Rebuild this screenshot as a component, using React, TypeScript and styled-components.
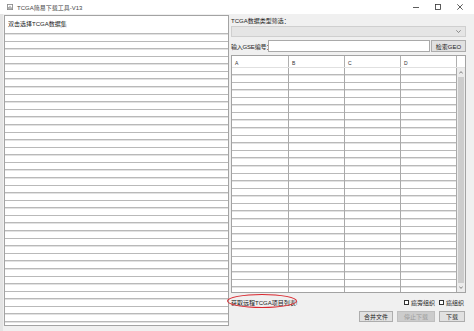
import React from 'react';
import styled, { createGlobalStyle } from 'styled-components';

const GlobalStyle = createGlobalStyle`
  html, body {
    margin: 0;
    padding: 0;
    background: #f0f0f0;
  }
  body {
    font-family: "Liberation Sans", "Noto Sans CJK SC", sans-serif;
    color: #222;
  }
`;

const ROW_H = 7.58;
const LIST_ROWS = 40;
const TABLE_ROWS = 31;
const COLUMNS = [
  { key: 'A', width: 57 },
  { key: 'B', width: 56 },
  { key: 'C', width: 56 },
  { key: 'D', width: 56 },
];

export default function App() {
  return (
    <>
      <GlobalStyle />
      <Window>
        <TitleBar>
          <AppIcon viewBox="0 0 7 7">
            <rect x="0.5" y="0.5" width="6" height="6" fill="#fff" stroke="#8a8a8a" />
            <rect x="1.6" y="3.5" width="1" height="2.3" fill="#7a7a7a" />
            <rect x="3" y="2.2" width="1" height="3.6" fill="#7a7a7a" />
            <rect x="4.4" y="4" width="1" height="1.8" fill="#7a7a7a" />
          </AppIcon>
          <TitleText>TCGA简易下载工具-V13</TitleText>
          <Controls>
            <CtrlBtn>
              <svg width="6" height="6" viewBox="0 0 6 6">
                <line x1="0" y1="3.5" x2="6" y2="3.5" stroke="#333" strokeWidth="0.8" />
              </svg>
            </CtrlBtn>
            <CtrlBtn>
              <svg width="6" height="6" viewBox="0 0 6 6">
                <rect x="0.5" y="0.5" width="5" height="5" fill="none" stroke="#333" strokeWidth="0.8" />
              </svg>
            </CtrlBtn>
            <CtrlBtn>
              <svg width="6" height="6" viewBox="0 0 6 6">
                <path d="M0.3 0.3 L5.7 5.7 M5.7 0.3 L0.3 5.7" stroke="#333" strokeWidth="0.8" />
              </svg>
            </CtrlBtn>
          </Controls>
        </TitleBar>

        <Body>
          <ListPanel>
            <ListHeader>双击选择TCGA数据集</ListHeader>
            {Array.from({ length: LIST_ROWS }).map((_, i) => (
              <ListRow key={i} />
            ))}
          </ListPanel>

          <RightColumn>
            <FieldLabel>TCGA数据类型筛选：</FieldLabel>
            <Combo>
              <svg width="5" height="3" viewBox="0 0 5 3">
                <path d="M0.3 0.3 L2.5 2.5 L4.7 0.3" fill="none" stroke="#666" strokeWidth="0.7" />
              </svg>
            </Combo>

            <GseRow>
              <GseLabel>输入GSE编号：</GseLabel>
              <TextInput />
              <Button $width={35}>检索GEO</Button>
            </GseRow>

            <Table>
              <TableHead>
                {COLUMNS.map((c) => (
                  <HeadCell key={c.key} $width={c.width}>
                    {c.key}
                  </HeadCell>
                ))}
                <HeadFiller />
              </TableHead>
              <TableBody>
                <RowsArea>
                  {Array.from({ length: TABLE_ROWS }).map((_, i) => (
                    <TableRow key={i}>
                      {COLUMNS.map((c) => (
                        <Cell key={c.key} $width={c.width} />
                      ))}
                    </TableRow>
                  ))}
                </RowsArea>
                <ScrollBar>
                  <ScrollArrow>
                    <svg width="4" height="3" viewBox="0 0 4 3">
                      <path d="M0.3 2.5 L2 0.6 L3.7 2.5" fill="none" stroke="#555" strokeWidth="0.7" />
                    </svg>
                  </ScrollArrow>
                  <ScrollThumb />
                  <ScrollArrow>
                    <svg width="4" height="3" viewBox="0 0 4 3">
                      <path d="M0.3 0.5 L2 2.4 L3.7 0.5" fill="none" stroke="#555" strokeWidth="0.7" />
                    </svg>
                  </ScrollArrow>
                </ScrollBar>
              </TableBody>
            </Table>

            <StatusRow>
              <StatusText>
                获取远程TCGA项目列表!
                <Ellipse />
              </StatusText>
              <CheckGroup>
                <CheckItem>
                  <CheckBox />
                  癌旁组织
                </CheckItem>
                <CheckItem>
                  <CheckBox />
                  癌组织
                </CheckItem>
              </CheckGroup>
            </StatusRow>

            <ButtonRow>
              <Button $width={34}>合并文件</Button>
              <Button $width={38} $disabled>
                停止下载
              </Button>
              <Button $width={26}>下载</Button>
            </ButtonRow>
          </RightColumn>
        </Body>
      </Window>
    </>
  );
}

const Window = styled.div`
  width: 474px;
  height: 331px;
  display: flex;
  flex-direction: column;
  background: #f0f0f0;
  overflow: hidden;
  font-size: 6px;
`;

const TitleBar = styled.div`
  height: 14px;
  flex: none;
  display: flex;
  align-items: center;
  padding-left: 7px;
  background: #fff;
`;

const AppIcon = styled.svg`
  width: 6px;
  height: 6px;
  margin-right: 4px;
`;

const TitleText = styled.span`
  font-size: 6px;
  color: #444;
`;

const Controls = styled.div`
  margin-left: auto;
  display: flex;
  padding-right: 3px;
`;

const CtrlBtn = styled.div`
  width: 22px;
  height: 14px;
  display: flex;
  align-items: center;
  justify-content: center;
`;

const Body = styled.div`
  flex: 1;
  display: flex;
  gap: 2px;
  padding: 1px 0 0 4px;
  border-left: 3px solid #e4e4e4;
  box-sizing: border-box;
`;

const ListPanel = styled.div`
  width: 225px;
  height: 311px;
  margin-left: -3px;
  box-sizing: border-box;
  border: 1px solid #a3a3a3;
  background: #fff;
  overflow: hidden;
  display: flex;
  flex-direction: column;
`;

const lineBg = (h: number) => `linear-gradient(
    to bottom,
    #fff 0,
    #fff ${h - 2}px,
    #b9b9b9 ${h - 2}px,
    #b9b9b9 ${h - 1}px,
    #e2e2e2 ${h - 1}px,
    #e2e2e2 ${h}px
  )`;

const ListHeader = styled.div`
  flex: none;
  height: 18.6px;
  padding: 3px 0 0 3px;
  box-sizing: border-box;
  font-size: 6px;
  color: #222;
  background: ${lineBg(18.6)};
`;

const ListRow = styled.div`
  flex: none;
  height: ${ROW_H}px;
  background: ${lineBg(ROW_H)};
`;

const RightColumn = styled.div`
  width: 235px;
  display: flex;
  flex-direction: column;
`;

const FieldLabel = styled.div`
  height: 12px;
  display: flex;
  align-items: center;
  margin-top: -1px;
  font-size: 6px;
`;

const Combo = styled.div`
  height: 11px;
  box-sizing: border-box;
  border: 1px solid #cfcfcf;
  background: #e5e5e5;
  display: flex;
  align-items: center;
  justify-content: flex-end;
  padding-right: 4px;
`;

const GseRow = styled.div`
  height: 12px;
  margin-top: 3px;
  display: flex;
  align-items: stretch;
  gap: 1px;
`;

const GseLabel = styled.div`
  width: 36px;
  display: flex;
  align-items: center;
  font-size: 6px;
  white-space: nowrap;
  letter-spacing: -0.2px;
`;

const TextInput = styled.div`
  flex: 1;
  box-sizing: border-box;
  border: 1px solid #a9a9a9;
  background: #fff;
`;

const Button = styled.div<{ $width: number; $disabled?: boolean }>`
  width: ${(p) => p.$width}px;
  flex: none;
  box-sizing: border-box;
  border: 1px solid ${(p) => (p.$disabled ? '#bfbfbf' : '#adadad')};
  background: ${(p) => (p.$disabled ? '#cccccc' : '#e1e1e1')};
  color: ${(p) => (p.$disabled ? '#9a9a9a' : '#222')};
  font-size: 6px;
  display: flex;
  align-items: center;
  justify-content: center;
  white-space: nowrap;
`;

const Table = styled.div`
  height: 238px;
  margin-top: 3px;
  box-sizing: border-box;
  border: 1px solid #a3a3a3;
  background: #fff;
  display: flex;
  flex-direction: column;
  overflow: hidden;
`;

const TableHead = styled.div`
  height: 11px;
  flex: none;
  display: flex;
  border-bottom: 1px solid #e0e0e0;
`;

const HeadCell = styled.div<{ $width: number }>`
  width: ${(p) => p.$width}px;
  flex: none;
  box-sizing: border-box;
  border-right: 1px solid #b0b0b0;
  padding: 4px 0 0 3px;
  font-size: 5px;
  color: #333;
`;

const HeadFiller = styled.div`
  flex: 1;
`;

const TableBody = styled.div`
  flex: 1;
  display: flex;
  min-height: 0;
`;

const RowsArea = styled.div`
  width: 225px;
  overflow: hidden;
  display: flex;
  flex-direction: column;
`;

const TableRow = styled.div`
  flex: none;
  height: ${ROW_H}px;
  display: flex;
  background: ${lineBg(ROW_H)};
`;

const Cell = styled.div<{ $width: number }>`
  width: ${(p) => p.$width}px;
  flex: none;
  box-sizing: border-box;
  border-right: 1px solid #a9a9a9;
`;

const ScrollBar = styled.div`
  width: 8px;
  display: flex;
  flex-direction: column;
  background: #ececec;
`;

const ScrollArrow = styled.div`
  height: 9px;
  flex: none;
  display: flex;
  align-items: center;
  justify-content: center;
`;

const ScrollThumb = styled.div`
  flex: 1;
  margin: 0 1px;
  background: #cdcdcd;
`;

const StatusRow = styled.div`
  height: 18px;
  display: flex;
  align-items: center;
  justify-content: space-between;
`;

const StatusText = styled.div`
  position: relative;
  font-size: 6px;
  color: #222;
`;

const Ellipse = styled.span`
  position: absolute;
  left: -4px;
  top: -4px;
  width: 70px;
  height: 14px;
  border: 1.3px solid #d9282f;
  border-radius: 50%;
  box-sizing: border-box;
`;

const CheckGroup = styled.div`
  display: flex;
  gap: 4px;
  padding-right: 2px;
`;

const CheckItem = styled.label`
  display: flex;
  align-items: center;
  gap: 2px;
  font-size: 6px;
  color: #222;
`;

const CheckBox = styled.span`
  width: 5px;
  height: 5px;
  box-sizing: border-box;
  border: 1px solid #333;
  background: #fff;
`;

const ButtonRow = styled.div`
  height: 11px;
  display: flex;
  justify-content: flex-end;
  gap: 4px;
  padding-right: 1px;
`;
